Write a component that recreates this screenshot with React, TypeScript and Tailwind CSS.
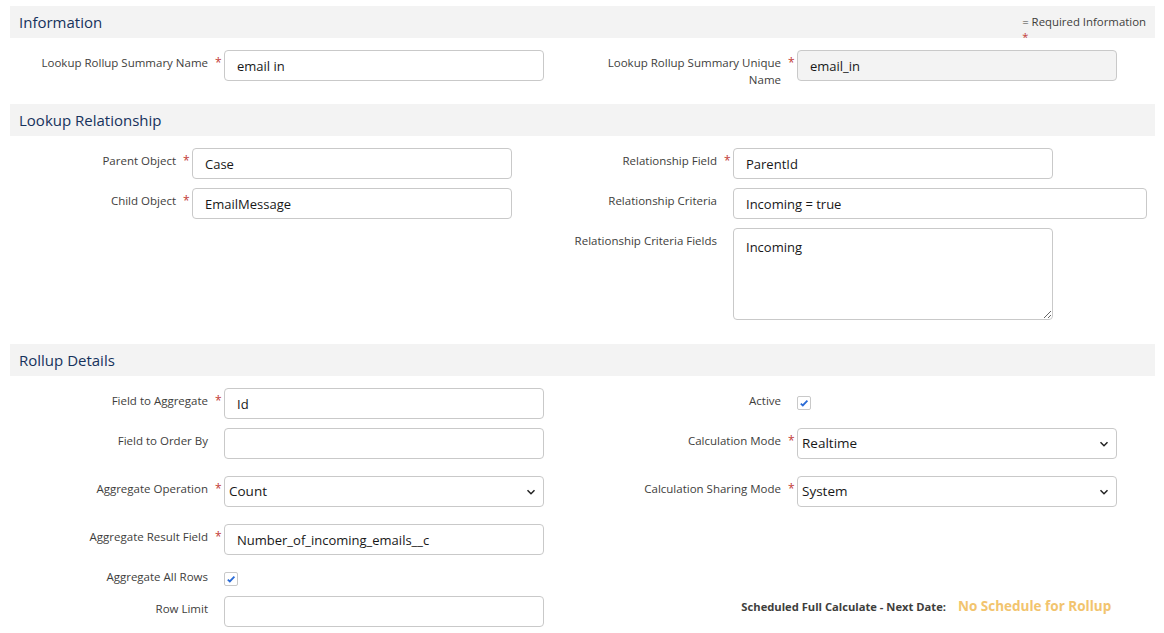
import React from "react";

const FONT = "font-['Open_Sans','Segoe_UI',sans-serif]";

function Label({
  cls,
  text,
  req,
  pt = "pt-[4px]",
  nowrap,
}: {
  cls: string;
  text: string;
  req?: boolean;
  pt?: string;
  nowrap?: boolean;
}) {
  return (
    <>
      <div
        className={`${cls} shrink-0 text-right pr-[4px] text-[11.5px] leading-[17px] text-[#3e3e3c] ${pt} ${
          nowrap ? "whitespace-nowrap" : ""
        }`}
      >
        {text}
      </div>
      <div
        className={`w-[12px] shrink-0 pl-[3px] text-[12px] leading-[17px] text-[#c23934] ${pt}`}
      >
        {req ? "*" : ""}
      </div>
    </>
  );
}

function TextInput({
  value,
  cls = "w-[320px]",
  disabled,
}: {
  value: string;
  cls?: string;
  disabled?: boolean;
}) {
  return (
    <input
      readOnly
      defaultValue={value}
      className={`${cls} h-[31px] shrink-0 border border-[#c9c9c9] rounded-[4px] ${
        disabled ? "bg-[#f3f3f3]" : "bg-white"
      } px-[12px] text-[13px] text-[#181818] outline-none ${FONT}`}
    />
  );
}

function Select({ value }: { value: string }) {
  return (
    <div className="w-[320px] h-[31px] shrink-0 border border-[#c9c9c9] rounded-[4px] bg-white pl-[4px] pr-[7px] flex items-center justify-between text-[13.5px] text-[#181818]">
      <span>{value}</span>
      <svg width="10" height="10" viewBox="0 0 10 10" fill="none">
        <path d="M1.5 3.2 L5 6.7 L8.5 3.2" stroke="#222" strokeWidth="1.5" />
      </svg>
    </div>
  );
}

function Check({ mt }: { mt: string }) {
  return (
    <div
      className={`${mt} w-[14px] h-[14px] shrink-0 border border-[#c9c9c9] rounded-[2px] bg-white flex items-center justify-center`}
    >
      <svg width="10" height="10" viewBox="0 0 10 10" fill="none">
        <path d="M1.8 5.6 L3.8 7.4 L8.4 2.6" stroke="#2a6bd6" strokeWidth="1.8" />
      </svg>
    </div>
  );
}

function Header({ title, children }: { title: string; children?: React.ReactNode }) {
  return (
    <div className="h-[32px] bg-[#f3f3f3] flex items-start justify-between pl-[9px] pr-[9px]">
      <div className="pt-[5px] text-[15px] leading-[22px] text-[#16325c]">{title}</div>
      {children}
    </div>
  );
}

export default function App() {
  return (
    <div className={`${FONT} bg-white w-[1164px] h-[633px] overflow-hidden pt-[6px]`}>
      <div className="ml-[10px] w-[1145px]">
        {/* Information */}
        <Header title="Information">
          <div className="flex flex-col items-start pt-[8px]">
            <div className="text-[11.4px] leading-[15px] text-[#3e3e3c]">= Required Information</div>
            <div className="mt-[3px] text-[11px] leading-[10px] text-[#c23934]">*</div>
          </div>
        </Header>
        <div className="h-[66px] pt-[12px] grid grid-cols-[572px_1fr]">
          <div className="flex items-start">
            <Label cls="w-[202px]" text="Lookup Rollup Summary Name" req />
            <TextInput value="email in" />
          </div>
          <div className="flex items-start">
            <Label cls="w-[203px]" text="Lookup Rollup Summary Unique Name" req />
            <TextInput value="email_in" disabled />
          </div>
        </div>

        {/* Lookup Relationship */}
        <Header title="Lookup Relationship" />
        <div className="h-[208px] pt-[12px] grid grid-cols-[560px_1fr]">
          <div className="flex flex-col gap-[9px]">
            <div className="flex items-start">
              <Label cls="w-[170px]" text="Parent Object" req />
              <TextInput value="Case" />
            </div>
            <div className="flex items-start">
              <Label cls="w-[170px]" text="Child Object" req />
              <TextInput value="EmailMessage" />
            </div>
          </div>
          <div className="flex flex-col gap-[9px]">
            <div className="flex items-start">
              <Label cls="w-[151px]" text="Relationship Field" req />
              <TextInput value="ParentId" />
            </div>
            <div className="flex items-start">
              <Label cls="w-[151px]" text="Relationship Criteria" />
              <TextInput value="Incoming = true" cls="w-[414px]" />
            </div>
            <div className="flex items-start">
              <Label cls="w-[151px]" text="Relationship Criteria Fields" nowrap />
              <textarea
                readOnly
                defaultValue="Incoming"
                className={`w-[320px] h-[92px] shrink-0 border border-[#c9c9c9] rounded-[4px] bg-white px-[12px] pt-[8px] text-[13px] leading-[20px] text-[#181818] outline-none resize ${FONT}`}
              />
            </div>
          </div>
        </div>

        {/* Rollup Details */}
        <Header title="Rollup Details" />
        <div className="pt-[12px]">
          <div className="h-[40px] grid grid-cols-[572px_1fr]">
            <div className="flex items-start">
              <Label cls="w-[202px]" text="Field to Aggregate" req />
              <TextInput value="Id" />
            </div>
            <div className="flex items-start">
              <Label cls="w-[203px]" text="Active" />
              <Check mt="mt-[8px]" />
            </div>
          </div>
          <div className="h-[48px] grid grid-cols-[572px_1fr]">
            <div className="flex items-start">
              <Label cls="w-[202px]" text="Field to Order By" />
              <TextInput value="" />
            </div>
            <div className="flex items-start">
              <Label cls="w-[203px]" text="Calculation Mode" req />
              <Select value="Realtime" />
            </div>
          </div>
          <div className="h-[48px] grid grid-cols-[572px_1fr]">
            <div className="flex items-start">
              <Label cls="w-[202px]" text="Aggregate Operation" req />
              <Select value="Count" />
            </div>
            <div className="flex items-start">
              <Label cls="w-[203px]" text="Calculation Sharing Mode" req />
              <Select value="System" />
            </div>
          </div>
          <div className="h-[44px] grid grid-cols-[572px_1fr]">
            <div className="flex items-start">
              <Label cls="w-[202px]" text="Aggregate Result Field" req />
              <TextInput value="Number_of_incoming_emails__c" />
            </div>
            <div />
          </div>
          <div className="h-[28px] grid grid-cols-[572px_1fr]">
            <div className="flex items-start">
              <Label cls="w-[202px]" text="Aggregate All Rows" pt="pt-0" />
              <Check mt="mt-[4px]" />
            </div>
            <div />
          </div>
          <div className="h-[31px] grid grid-cols-[572px_1fr]">
            <div className="flex items-start">
              <Label cls="w-[202px]" text="Row Limit" />
              <TextInput value="" />
            </div>
            <div className="flex items-start pt-[1px]">
              <div className="w-[364px] shrink-0 text-right text-[11.2px] leading-[17px] font-bold text-[#3e3e3c] pt-[1px]">
                Scheduled Full Calculate - Next Date:
              </div>
              <div className="pl-[12px] text-[13.5px] leading-[19px] font-bold text-[#f2c46e]">
                No Schedule for Rollup
              </div>
            </div>
          </div>
        </div>
      </div>
    </div>
  );
}
